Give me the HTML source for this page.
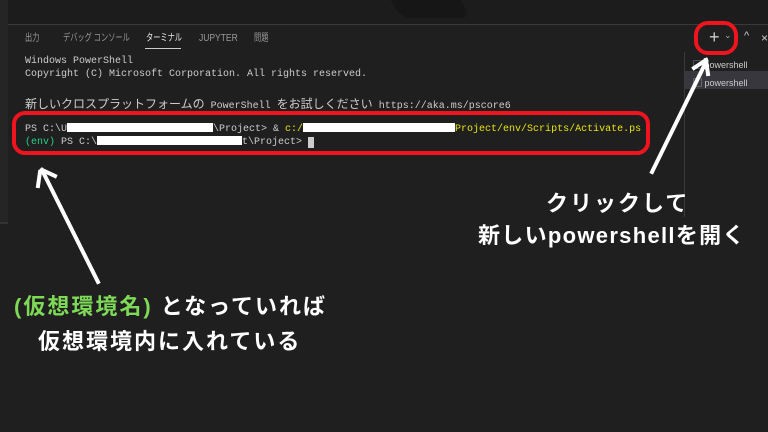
<!DOCTYPE html>
<html><head><meta charset="utf-8"><style>
html,body{margin:0;padding:0;width:768px;height:432px;overflow:hidden;background:#1f1f1f;position:relative;font-family:"Liberation Sans","Noto Sans CJK JP",sans-serif}
.a{position:absolute;white-space:nowrap}
.m{font-family:"Liberation Mono","Noto Sans CJK JP",monospace;font-size:10px;color:#cccccc}
.j{font-size:12px}
.t{font-size:10px;line-height:12px;color:#9a9a9a;top:33px;transform:scaleX(0.72);transform-origin:left}
.b{font-weight:bold;font-size:22px;color:#fff;letter-spacing:2px}
.w{display:inline-block;background:#fff;height:9px;vertical-align:-1px}
</style></head><body>
<div class="a" style="left:0;top:0;width:768px;height:24px;background:#1c1c1c"></div>
<div class="a" style="left:390px;top:-20px;width:70px;height:38px;background:#161616;border-radius:10px;transform:skewX(30deg)"></div>
<div class="a" style="left:8px;top:24px;width:760px;height:1px;background:#3a3a3a"></div>
<div class="a" style="left:0;top:0;width:8px;height:222px;background:#252526"></div>
<div class="a" style="left:0;top:222px;width:8px;height:2px;background:#333"></div>
<div class="a t" style="left:25px">出力</div>
<div class="a t" style="left:63px">デバッグ コンソール</div>
<div class="a t" style="left:146px;color:#e8e8e8">ターミナル</div>
<div class="a" style="left:145px;top:48px;width:36px;height:1px;background:#ccc"></div>
<div class="a t" style="left:199px;transform:scaleX(0.85)">JUPYTER</div>
<div class="a t" style="left:254px">問題</div>
<div class="a" style="left:709px;top:27px;color:#ccc;font-size:18px">+</div>
<div class="a" style="left:724px;top:30px;color:#aaa;font-size:9px">⌄</div>
<div class="a" style="left:744px;top:30px;color:#ccc;font-size:11px">^</div>
<div class="a" style="left:761px;top:31px;color:#ccc;font-size:12px">×</div>
<div class="a" style="left:684px;top:52px;width:1px;height:165px;background:#3a3a3a"></div>
<div class="a" style="left:685px;top:71px;width:83px;height:18px;background:#37373d"></div>
<div class="a" style="left:693px;top:58px;color:#ccc;font-size:9px">▢ powershell</div>
<div class="a" style="left:693px;top:76px;color:#ccc;font-size:9px">▢ powershell</div>
<div class="a m" style="left:25px;top:56px">Windows PowerShell</div>
<div class="a m" style="left:25px;top:69px">Copyright (C) Microsoft Corporation. All rights reserved.</div>
<div class="a m" style="left:25px;top:95px"><span class="j">新しいクロスプラットフォームの</span> PowerShell <span class="j">をお試しください</span> https://aka.ms/pscore6</div>
<div class="a m" style="left:25px;top:123px">PS C:\U<span class="w" style="width:146px"></span>\Project&gt; &amp; <span style="color:#e5e510">c:/<span class="w" style="width:152px"></span>Project/env/Scripts/Activate.ps</span></div>
<div class="a m" style="left:25px;top:136px"><span style="color:#23d18b">(env)</span> PS C:\<span class="w" style="width:145px"></span>t\Project&gt; <span style="background:#ccc">&nbsp;</span></div>
<div class="a" style="left:12px;top:111px;width:630px;height:36px;border:4px solid #f0141e;border-radius:13px"></div>
<div class="a" style="left:694px;top:21px;width:36px;height:26px;border:4px solid #f0141e;border-radius:14px"></div>
<svg class="a" style="left:0;top:0" width="768" height="432">
<g stroke="#fff" stroke-width="4" fill="none" stroke-linecap="square">
<path d="M98 282 L42 170 M40 172 L38 186 M42 170 L55 176"/>
<path d="M652 172 L706 62 M706 60 L694 68 M706 60 L708 74"/>
</g></svg>
<div class="a b" style="left:14px;top:289px"><span style="color:#7ed957">(仮想環境名)</span> となっていれば</div>
<div class="a b" style="left:38px;top:324px">仮想環境内に入れている</div>
<div class="a b" style="left:546px;top:186px">クリックして</div>
<div class="a b" style="left:478px;top:218px;letter-spacing:1.3px">新しいpowershellを開く</div>
</body></html>
